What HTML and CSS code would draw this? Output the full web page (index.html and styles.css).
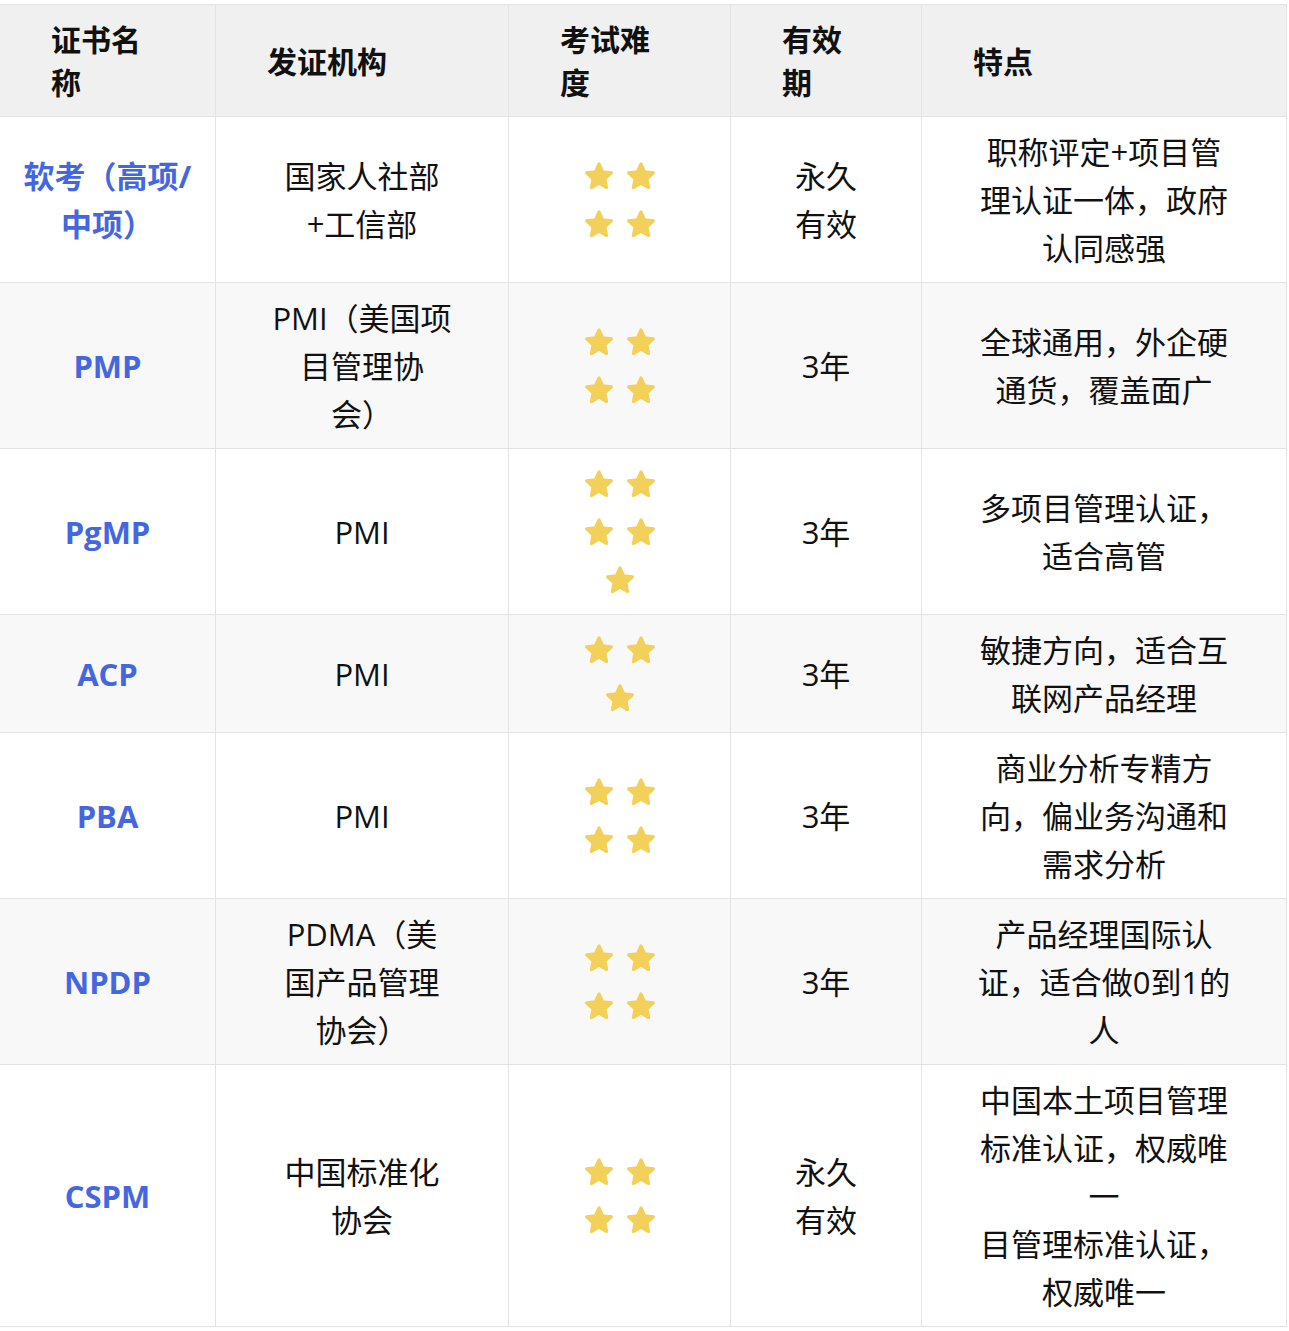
FILE: index.html
```html
<!DOCTYPE html>
<html lang="zh-CN">
<head>
<meta charset="utf-8">
<title>证书对比</title>
<link rel="stylesheet" href="styles.css">
</head>
<body>
<svg class="defs" width="0" height="0" aria-hidden="true">
  <symbol id="star" viewBox="0 0 30 30">
    <polygon points="15,3 18.7,10.9 27.4,11.9 20.9,17.9 22.6,26.5 15,22.2 7.4,26.5 9.1,17.9 2.6,11.9 11.3,10.9" fill="#f3d05a" stroke="#f3d05a" stroke-width="3.2" stroke-linejoin="round"/>
  </symbol>
</svg>
<div class="wrap">
<table class="cert-table">
  <colgroup>
    <col class="c1"><col class="c2"><col class="c3"><col class="c4"><col class="c5">
  </colgroup>
  <thead>
    <tr>
      <th>证书名<br>称</th>
      <th>发证机构</th>
      <th>考试难<br>度</th>
      <th>有效<br>期</th>
      <th>特点</th>
    </tr>
  </thead>
  <tbody>
    <tr>
      <td class="name">软考（高项/<br>中项）</td>
      <td>国家人社部<br>+工信部</td>
      <td><span class="stars"><span class="s"><svg><use href="#star"/></svg></span><span class="s"><svg><use href="#star"/></svg></span><span class="s"><svg><use href="#star"/></svg></span><span class="s"><svg><use href="#star"/></svg></span></span></td>
      <td>永久<br>有效</td>
      <td>职称评定+项目管<br>理认证一体，政府<br>认同感强</td>
    </tr>
    <tr>
      <td class="name">PMP</td>
      <td>PMI（美国项<br>目管理协<br>会）</td>
      <td><span class="stars"><span class="s"><svg><use href="#star"/></svg></span><span class="s"><svg><use href="#star"/></svg></span><span class="s"><svg><use href="#star"/></svg></span><span class="s"><svg><use href="#star"/></svg></span></span></td>
      <td>3年</td>
      <td>全球通用，外企硬<br>通货，覆盖面广</td>
    </tr>
    <tr>
      <td class="name">PgMP</td>
      <td>PMI</td>
      <td><span class="stars"><span class="s"><svg><use href="#star"/></svg></span><span class="s"><svg><use href="#star"/></svg></span><span class="s"><svg><use href="#star"/></svg></span><span class="s"><svg><use href="#star"/></svg></span><span class="s"><svg><use href="#star"/></svg></span></span></td>
      <td>3年</td>
      <td>多项目管理认证，<br>适合高管</td>
    </tr>
    <tr>
      <td class="name">ACP</td>
      <td>PMI</td>
      <td><span class="stars"><span class="s"><svg><use href="#star"/></svg></span><span class="s"><svg><use href="#star"/></svg></span><span class="s"><svg><use href="#star"/></svg></span></span></td>
      <td>3年</td>
      <td>敏捷方向，适合互<br>联网产品经理</td>
    </tr>
    <tr>
      <td class="name">PBA</td>
      <td>PMI</td>
      <td><span class="stars"><span class="s"><svg><use href="#star"/></svg></span><span class="s"><svg><use href="#star"/></svg></span><span class="s"><svg><use href="#star"/></svg></span><span class="s"><svg><use href="#star"/></svg></span></span></td>
      <td>3年</td>
      <td>商业分析专精方<br>向，偏业务沟通和<br>需求分析</td>
    </tr>
    <tr>
      <td class="name">NPDP</td>
      <td>PDMA（美<br>国产品管理<br>协会）</td>
      <td><span class="stars"><span class="s"><svg><use href="#star"/></svg></span><span class="s"><svg><use href="#star"/></svg></span><span class="s"><svg><use href="#star"/></svg></span><span class="s"><svg><use href="#star"/></svg></span></span></td>
      <td>3年</td>
      <td>产品经理国际认<br>证，适合做0到1的<br>人</td>
    </tr>
    <tr>
      <td class="name">CSPM</td>
      <td>中国标准化<br>协会</td>
      <td><span class="stars"><span class="s"><svg><use href="#star"/></svg></span><span class="s"><svg><use href="#star"/></svg></span><span class="s"><svg><use href="#star"/></svg></span><span class="s"><svg><use href="#star"/></svg></span></span></td>
      <td>永久<br>有效</td>
      <td>中国本土项目管理<br>标准认证，权威唯<br>一<br>目管理标准认证，<br>权威唯一</td>
    </tr>
  </tbody>
</table>
</div>
</body>
</html>
```

FILE: styles.css
```css
html, body {
  margin: 0;
  padding: 0;
  background: #ffffff;
}

.defs {
  position: absolute;
  width: 0;
  height: 0;
  overflow: hidden;
}

.wrap {
  padding-top: 4px;
  margin-left: -1px;
}

.cert-table {
  border-collapse: collapse;
  table-layout: fixed;
  width: 1287px;
  font-family: "Open Sans", "Noto Sans CJK SC", sans-serif;
  color: #111111;
}

.c1 { width: 216px; }
.c2 { width: 293px; }
.c3 { width: 222px; }
.c4 { width: 191px; }
.c5 { width: 365px; }

.cert-table th,
.cert-table td {
  border: 1px solid #e3e3e3;
  vertical-align: middle;
}

.cert-table th {
  background: #f0f0f0;
  font-size: 30px;
  font-weight: 700;
  line-height: 43px;
  text-align: left;
  padding: 13px 20px 12px 51px;
  color: #111111;
}

.cert-table td {
  font-size: 31px;
  font-weight: 400;
  line-height: 48px;
  text-align: center;
  padding: 11px 8px 10px;
}

.cert-table tbody tr:nth-child(even) td {
  background: #f8f8f8;
}

.cert-table td.name {
  color: #4467e0;
  font-weight: 700;
}

.stars {
  display: inline-flex;
  flex-wrap: wrap;
  justify-content: center;
  width: 84px;
  vertical-align: middle;
}

.stars .s {
  display: flex;
  align-items: center;
  justify-content: center;
  width: 42px;
  height: 48px;
}

.stars svg {
  width: 30px;
  height: 30px;
  display: block;
}
```
